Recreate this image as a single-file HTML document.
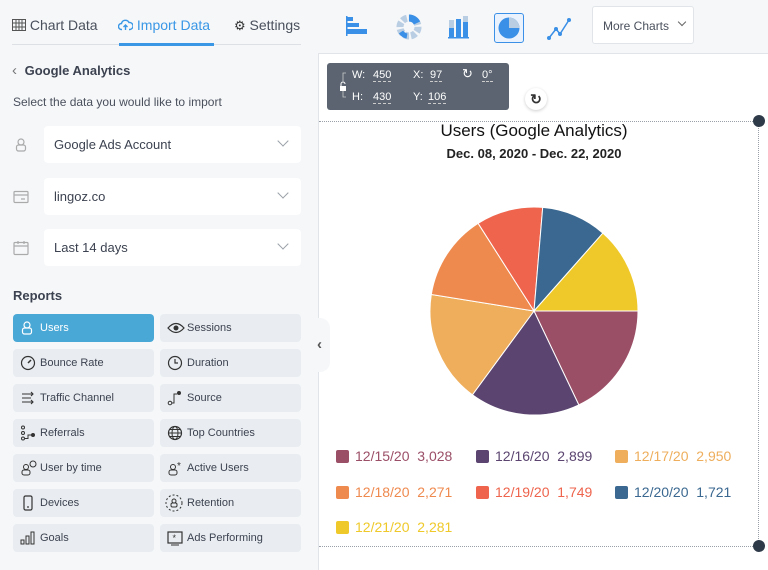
<!DOCTYPE html>
<html><head><meta charset="utf-8"><style>
*{box-sizing:border-box;margin:0;padding:0}
body{width:768px;height:570px;overflow:hidden;background:#f5f7f9;font-family:"Liberation Sans",sans-serif;position:relative;color:#3c4250}
.abs{position:absolute}
.tab{position:absolute;top:17px;font-size:14px;color:#4a505c}
.sel{position:absolute;left:44px;width:257px;height:37px;background:#fff;border-radius:4px;font-size:13px;color:#3c4250;padding:11px 10px}
.sel .chev{position:absolute;right:14px;top:11px;width:8px;height:8px;border-right:1.5px solid #9aa0a8;border-bottom:1.5px solid #9aa0a8;transform:rotate(45deg)}
.btn{position:absolute;width:141px;height:28px;background:#e9edf1;border-radius:4px;font-size:11px;color:#3c4250;padding:8px 0 0 27px}
.btn svg{position:absolute;left:7px;top:6px}
.leg{position:absolute;font-size:14px}
.leg i{position:absolute;left:-19px;top:2px;width:13px;height:13px;border-radius:2px}
.ico{position:absolute;left:12px;width:18px;height:18px}
</style></head><body>
<!-- left panel -->
<div class="tab" style="left:12px"><svg width="14" height="12" style="vertical-align:-1px"><rect x="0.5" y="0.5" width="13" height="11" fill="none" stroke="#555" /><path d="M0 4h14M0 8h14M4 0v12M7 0v12M10 0v12" stroke="#555" stroke-width="1"/></svg> Chart Data</div>
<div class="tab" style="left:118px;color:#3a97e6"><svg width="15" height="12" style="vertical-align:-1px"><path d="M4 10.5H3.5a3 3 0 0 1 0-6 4 4 0 0 1 7.5-1 3 3 0 0 1 1 7H11" fill="none" stroke="#3a97e6" stroke-width="1.4"/><path d="M7.5 11V6M5.5 8l2-2 2 2" fill="none" stroke="#3a97e6" stroke-width="1.4"/></svg> Import Data</div>
<div class="tab" style="left:234px"><span style="font-size:13px;color:#333">⚙</span> Settings</div>
<div class="abs" style="left:12px;top:44px;width:289px;height:1px;background:#dde1e6"></div>
<div class="abs" style="left:119px;top:43px;width:95px;height:3px;background:#3a97e6"></div>
<div class="abs" style="left:12px;top:62px;font-size:13px;font-weight:bold;color:#3c4250"><span style="color:#777;font-weight:normal;font-size:15px;margin-right:4px">‹</span> Google Analytics</div>
<div class="abs" style="left:13px;top:95px;font-size:12px;color:#4a505c">Select the data you would like to import</div>
<svg class="ico" style="top:136px" viewBox="0 0 18 18"><circle cx="9" cy="6" r="3" fill="none" stroke="#aaa" stroke-width="1.2"/><rect x="4.5" y="9" width="9" height="6" rx="2" fill="none" stroke="#aaa" stroke-width="1.2"/></svg>
<div class="sel" style="top:126px">Google Ads Account<span class="chev"></span></div>
<svg class="ico" style="top:188px" viewBox="0 0 18 18"><rect x="2" y="3.5" width="14" height="11" rx="1" fill="none" stroke="#aaa" stroke-width="1.2"/><path d="M2 7h14M9 11h4" stroke="#aaa" stroke-width="1.2"/></svg>
<div class="sel" style="top:178px">lingoz.co<span class="chev"></span></div>
<svg class="ico" style="top:239px" viewBox="0 0 18 18"><rect x="2" y="3.5" width="14" height="12" rx="1" fill="none" stroke="#aaa" stroke-width="1.2"/><path d="M2 7h14M6 2v3M12 2v3" stroke="#aaa" stroke-width="1.2"/></svg>
<div class="sel" style="top:229px">Last 14 days<span class="chev"></span></div>
<div class="abs" style="left:13px;top:288px;font-size:13px;font-weight:bold;color:#3c4250">Reports</div>

<div class="btn" style="left:13px;top:314px;background:#4aa8d6;color:#fff"><svg width="14" height="16"><circle cx="7" cy="5" r="3" fill="none" stroke="#fff" stroke-width="1.2"/><rect x="2.5" y="8" width="9" height="6" rx="2" fill="none" stroke="#fff" stroke-width="1.2"/></svg>Users</div>
<div class="btn" style="left:160px;top:314px"><svg width="18" height="16"><path d="M1 8q8-9 16 0q-8 9-16 0z" fill="none" stroke="#333" stroke-width="1.2"/><circle cx="9" cy="8" r="2.5" fill="#333"/></svg>Sessions</div>
<div class="btn" style="left:13px;top:349px"><svg width="16" height="16"><circle cx="8" cy="8" r="6.5" fill="none" stroke="#333" stroke-width="1.2"/><path d="M8 8l3-3" stroke="#333" stroke-width="1.5"/></svg>Bounce Rate</div>
<div class="btn" style="left:160px;top:349px"><svg width="16" height="16"><circle cx="8" cy="8" r="6.5" fill="none" stroke="#333" stroke-width="1.2"/><path d="M8 4v4h3" fill="none" stroke="#333" stroke-width="1.2"/></svg>Duration</div>
<div class="btn" style="left:13px;top:384px"><svg width="16" height="16"><path d="M2 4h11M2 8h9M2 12h11M11 2l2 2-2 2M11 10l2 2-2 2" fill="none" stroke="#333" stroke-width="1.1"/></svg>Traffic Channel</div>
<div class="btn" style="left:160px;top:384px"><svg width="16" height="16"><circle cx="3" cy="13" r="1.8" fill="none" stroke="#333"/><path d="M5 13h2V4h3" fill="none" stroke="#333"/><circle cx="12" cy="3" r="2" fill="#333"/></svg>Source</div>
<div class="btn" style="left:13px;top:419px"><svg width="16" height="16"><circle cx="3" cy="2.5" r="1.5" fill="none" stroke="#333"/><circle cx="3" cy="8" r="1.5" fill="none" stroke="#333"/><circle cx="3" cy="13.5" r="1.5" fill="none" stroke="#333"/><path d="M5 13.5h3V10h4" fill="none" stroke="#333"/><circle cx="13" cy="10" r="2" fill="#333"/></svg>Referrals</div>
<div class="btn" style="left:160px;top:419px"><svg width="16" height="16"><circle cx="8" cy="8" r="6.5" fill="none" stroke="#333" stroke-width="1.2"/><ellipse cx="8" cy="8" rx="3" ry="6.5" fill="none" stroke="#333"/><path d="M1.5 8h13M3 4.5h10M3 11.5h10" stroke="#333"/></svg>Top Countries</div>
<div class="btn" style="left:13px;top:454px"><svg width="18" height="16"><circle cx="6" cy="7" r="2.5" fill="none" stroke="#333"/><rect x="2" y="10" width="8" height="5" rx="2" fill="none" stroke="#333"/><circle cx="13" cy="4" r="3" fill="none" stroke="#333"/></svg>User by time</div>
<div class="btn" style="left:160px;top:454px"><svg width="18" height="16"><circle cx="6" cy="7" r="2.5" fill="none" stroke="#333"/><rect x="2" y="10" width="8" height="5" rx="2" fill="none" stroke="#333"/><text x="10" y="9" font-size="10" fill="#333">*</text></svg>Active Users</div>
<div class="btn" style="left:13px;top:489px"><svg width="16" height="16"><rect x="4" y="1" width="8" height="14" rx="1.5" fill="none" stroke="#333" stroke-width="1.2"/><circle cx="8" cy="12" r="0.9" fill="#333"/></svg>Devices</div>
<div class="btn" style="left:160px;top:489px"><svg width="18" height="18" style="top:5px;left:5px"><circle cx="9" cy="9" r="8" fill="none" stroke="#333" stroke-dasharray="2 2"/><circle cx="9" cy="7" r="2" fill="none" stroke="#333"/><rect x="6" y="9" width="6" height="4" rx="1.5" fill="none" stroke="#333"/></svg>Retention</div>
<div class="btn" style="left:13px;top:524px"><svg width="16" height="16"><rect x="1" y="10" width="3" height="4" fill="none" stroke="#333"/><rect x="6" y="6" width="3" height="8" fill="none" stroke="#333"/><rect x="11" y="2" width="3" height="12" fill="none" stroke="#333"/></svg>Goals</div>
<div class="btn" style="left:160px;top:524px"><svg width="16" height="16"><rect x="1" y="2" width="14" height="11" fill="none" stroke="#333" stroke-width="1.2"/><path d="M4 15h8" stroke="#333"/><text x="5.5" y="11" font-size="9" fill="#333">*</text></svg>Ads Performing</div>

<!-- top bar -->
<div class="abs" style="left:319px;top:53px;width:449px;height:1px;background:#e1e4e8"></div>
<div class="abs" style="left:319px;top:54px;width:449px;height:516px;background:#fff"></div>
<!-- divider and collapse tab -->
<div class="abs" style="left:318px;top:53px;width:1px;height:517px;background:#e1e4e8"></div>
<div class="abs" style="left:308px;top:318px;width:22px;height:54px;background:#f5f7f9;border-radius:0 10px 10px 0"></div>
<div class="abs" style="left:317px;top:336px;font-size:15px;color:#555;font-weight:bold">‹</div>
<svg class="abs" style="left:345px;top:14px" width="24" height="24"><rect x="2" y="3" width="6" height="4" fill="#3a8fe6"/><rect x="2" y="9" width="12" height="4" fill="#3a8fe6"/><rect x="2" y="15" width="20" height="5" fill="#3a8fe6"/><rect x="1" y="2" width="1.5" height="20" fill="#3a8fe6"/></svg>
<svg class="abs" style="left:395px;top:13px" width="28" height="28" viewBox="0 0 28 28"><circle cx="14" cy="14" r="9" fill="none" stroke="#b9cde3" stroke-width="7" stroke-dasharray="5 2"/><path d="M14 5a9 9 0 0 1 8 5" fill="none" stroke="#3a8fe6" stroke-width="7"/><path d="M12 23a9 9 0 0 1-6-4" fill="none" stroke="#3a8fe6" stroke-width="5"/></svg>
<svg class="abs" style="left:447px;top:14px" width="24" height="26"><rect x="2" y="6" width="5" height="17" fill="#b9cde3"/><rect x="2" y="14" width="5" height="9" fill="#3a8fe6"/><rect x="9" y="5" width="5" height="18" fill="#3a8fe6"/><rect x="16" y="2" width="5" height="21" fill="#b9cde3"/><rect x="16" y="8" width="5" height="15" fill="#3a8fe6"/><rect x="1" y="23" width="21" height="1.5" fill="#3a8fe6"/></svg>
<div class="abs" style="left:494px;top:13px;width:30px;height:30px;border:1.5px solid #3a8fe6;border-radius:3px;background:#eaf3fd"></div>
<svg class="abs" style="left:497px;top:16px" width="24" height="24"><circle cx="12" cy="12" r="10.5" fill="#3a8fe6"/><path d="M12 12V1.5A10.5 10.5 0 0 1 22.5 12z" fill="#b9cde3"/></svg>
<svg class="abs" style="left:546px;top:15px" width="26" height="26"><path d="M3 23l7-9 4 5 9-14" fill="none" stroke="#3a8fe6" stroke-width="1.5"/><circle cx="3" cy="23" r="2" fill="#3a8fe6"/><circle cx="10" cy="14" r="2" fill="#3a8fe6"/><circle cx="14" cy="19" r="2" fill="#3a8fe6"/><circle cx="23" cy="5" r="2" fill="#3a8fe6"/></svg>
<div class="abs" style="left:592px;top:6px;width:102px;height:38px;background:#fff;border:1px solid #e1e4e8;border-radius:3px;font-size:12px;color:#4a505c;padding:12px 0 0 10px">More Charts<span style="position:absolute;right:8px;top:12px;width:6px;height:6px;border-right:1px solid #666;border-bottom:1px solid #666;transform:rotate(45deg)"></span></div>

<!-- dimension box -->
<div class="abs" style="left:327px;top:63px;width:182px;height:47px;background:#5b6470;border-radius:3px;color:#fff;font-size:11px">
<span class="abs" style="left:25px;top:6px">W:</span><span class="abs" style="left:46px;top:6px;border-bottom:1px dashed #ccc">450</span>
<span class="abs" style="left:86px;top:6px">X:</span><span class="abs" style="left:103px;top:6px;border-bottom:1px dashed #ccc">97</span>
<span class="abs" style="left:135px;top:3px;font-size:13px">↻</span><span class="abs" style="left:155px;top:6px;border-bottom:1px dashed #ccc">0°</span>
<span class="abs" style="left:25px;top:28px">H:</span><span class="abs" style="left:46px;top:28px;border-bottom:1px dashed #ccc">430</span>
<span class="abs" style="left:86px;top:28px">Y:</span><span class="abs" style="left:101px;top:28px;border-bottom:1px dashed #ccc">106</span>
<svg class="abs" style="left:10px;top:8px" width="14" height="30"><path d="M9 2H6v8M9 26H6v-8" fill="none" stroke="#ccc" stroke-width="0.8"/><rect x="3" y="15" width="6" height="5" fill="#fff"/><path d="M4 15v-2a2 2 0 0 1 4 0" fill="none" stroke="#fff"/></svg>
</div>
<div class="abs" style="left:525px;top:88px;width:22px;height:22px;border-radius:50%;background:#fff;box-shadow:0 1px 3px rgba(0,0,0,.2);text-align:center;font-size:14px;line-height:22px;color:#333;font-weight:bold">↻</div>

<!-- chart box -->
<div class="abs" style="left:319px;top:121px;width:440px;height:426px;border-top:1px dotted #9aa0a8;border-right:1px dotted #9aa0a8;border-bottom:1px dotted #9aa0a8"></div>
<div class="abs" style="left:753px;top:115px;width:12px;height:12px;border-radius:50%;background:#2e3a48"></div>
<div class="abs" style="left:753px;top:540px;width:12px;height:12px;border-radius:50%;background:#2e3a48"></div>
<div class="abs" style="left:319px;top:121px;width:430px;text-align:center;font-size:17px;color:#111">Users (Google Analytics)</div>
<div class="abs" style="left:319px;top:146px;width:430px;text-align:center;font-size:13px;font-weight:bold;color:#222">Dec. 08, 2020 - Dec. 22, 2020</div>
<svg class="abs" style="left:0;top:0" width="768" height="570">
<g stroke="#fff" stroke-width="1">
<path d="M534 311L638 311A104 104 0 0 1 578.8 404.9Z" fill="#9b4f67"/>
<path d="M534 311L578.8 404.9A104 104 0 0 1 472.4 394.8Z" fill="#5b4570"/>
<path d="M534 311L472.4 394.8A104 104 0 0 1 431.3 294.5Z" fill="#eeae5c"/>
<path d="M534 311L431.3 294.5A104 104 0 0 1 478.1 223.3Z" fill="#ef8a4f"/>
<path d="M534 311L478.1 223.3A104 104 0 0 1 542.7 207.4Z" fill="#ee644d"/>
<path d="M534 311L542.7 207.4A104 104 0 0 1 602.9 233.1Z" fill="#3b6890"/>
<path d="M534 311L602.9 233.1A104 104 0 0 1 638 311Z" fill="#efc92a"/>
</g></svg>
<div class="leg" style="left:355px;top:448px;color:#9b4f67"><i style="background:#9b4f67"></i>12/15/20&nbsp; 3,028</div>
<div class="leg" style="left:495px;top:448px;color:#5b4570"><i style="background:#5b4570"></i>12/16/20&nbsp; 2,899</div>
<div class="leg" style="left:634px;top:448px;color:#eeae5c"><i style="background:#eeae5c"></i>12/17/20&nbsp; 2,950</div>
<div class="leg" style="left:355px;top:484px;color:#ef8a4f"><i style="background:#ef8a4f"></i>12/18/20&nbsp; 2,271</div>
<div class="leg" style="left:495px;top:484px;color:#ee644d"><i style="background:#ee644d"></i>12/19/20&nbsp; 1,749</div>
<div class="leg" style="left:634px;top:484px;color:#3b6890"><i style="background:#3b6890"></i>12/20/20&nbsp; 1,721</div>
<div class="leg" style="left:355px;top:519px;color:#efc92a"><i style="background:#efc92a"></i>12/21/20&nbsp; 2,281</div>
</body></html>
